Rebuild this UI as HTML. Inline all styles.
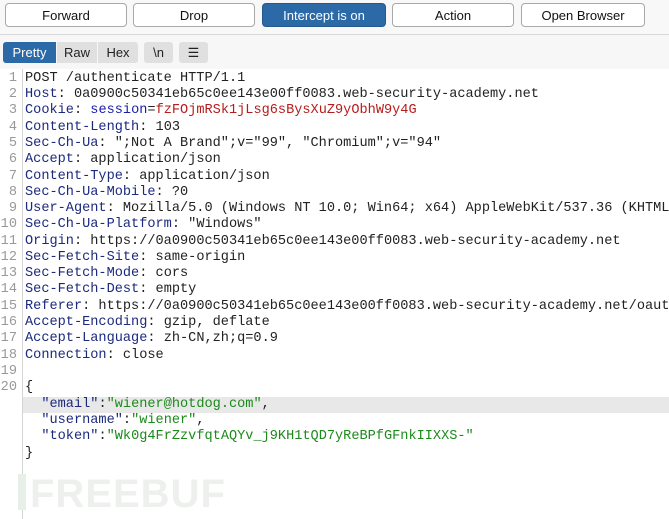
<!DOCTYPE html>
<html><head><meta charset="utf-8"><style>
body{margin:0;width:669px;height:519px;overflow:hidden;background:#fff;font-family:"Liberation Sans",sans-serif;position:relative}
.top{position:absolute;left:0;top:0;width:669px;height:34px;background:#f8f8f8;border-bottom:1px solid #d8d8d8}
.btn{position:absolute;top:3px;height:24px;border:1px solid #a8a8a8;border-radius:4px;background:#fff;font-size:13px;color:#111;text-align:center;line-height:24px;box-sizing:border-box}
.btn.on{background:#2c6aa7;border-color:#25588a;color:#fff}
.tb{position:absolute;left:0;top:35px;width:669px;height:34px;background:#f7f7f7}
.t{position:absolute;top:42px;height:21px;line-height:21px;font-size:13px;color:#222;background:#e0e0e0;text-align:center}
.wrap{position:absolute;left:0;top:0;width:669px;height:519px;overflow:hidden}
.gut{position:absolute;left:22px;top:69px;width:1px;height:450px;background:#d4d4d4}
.l{position:absolute;left:0;height:16px;line-height:16px;font-family:"Liberation Mono",monospace;font-size:13.6px;white-space:pre;color:#222}
.n{display:inline-block;width:17px;text-align:right;color:#999;margin-right:8px}
.k{color:#1c2a7e}.b{color:#1a1ab0}.r{color:#b71c1c}.g{color:#1b8a1b}
.hl{position:absolute;left:23px;top:397px;width:646px;height:16px;background:#e8e8e8}
</style></head><body>
<div class="top">
<div class="btn" style="left:5px;width:122px">Forward</div>
<div class="btn" style="left:133px;width:122px">Drop</div>
<div class="btn on" style="left:262px;width:124px">Intercept is on</div>
<div class="btn" style="left:392px;width:122px">Action</div>
<div class="btn" style="left:521px;width:124px">Open Browser</div>
</div>
<div class="tb"></div>
<div class="t" style="left:3px;width:53px;background:#2c6aa7;color:#fff;border-radius:3px 0 0 3px">Pretty</div>
<div class="t" style="left:57px;width:40px">Raw</div>
<div class="t" style="left:98px;width:40px;border-radius:0 3px 3px 0">Hex</div>
<div class="t" style="left:144px;width:29px;border-radius:3px">\n</div>
<div class="t" style="left:179px;width:29px;border-radius:3px">☰</div>
<div class="wrap">
<div class="hl"></div>
<div class="gut"></div>
<div style="position:absolute;left:18px;top:474px;width:8px;height:36px;background:#e6efe8"></div>
<div style="position:absolute;left:30px;top:474px;font:bold 40px/40px 'Liberation Sans',sans-serif;color:#eef0ee;letter-spacing:1px">FREEBUF</div>
<div class="l" style="top:71px"><span class="n">1</span>POST /authenticate HTTP/1.1</div>
<div class="l" style="top:87px"><span class="n">2</span><span class="k">Host</span>: 0a0900c50341eb65c0ee143e00ff0083.web-security-academy.net</div>
<div class="l" style="top:103px"><span class="n">3</span><span class="k">Cookie</span>: <span class="b">session</span>=<span class="r">fzFOjmRSk1jLsg6sBysXuZ9yObhW9y4G</span></div>
<div class="l" style="top:120px"><span class="n">4</span><span class="k">Content-Length</span>: 103</div>
<div class="l" style="top:136px"><span class="n">5</span><span class="k">Sec-Ch-Ua</span>: ";Not A Brand";v="99", "Chromium";v="94"</div>
<div class="l" style="top:152px"><span class="n">6</span><span class="k">Accept</span>: application/json</div>
<div class="l" style="top:169px"><span class="n">7</span><span class="k">Content-Type</span>: application/json</div>
<div class="l" style="top:185px"><span class="n">8</span><span class="k">Sec-Ch-Ua-Mobile</span>: ?0</div>
<div class="l" style="top:201px"><span class="n">9</span><span class="k">User-Agent</span>: Mozilla/5.0 (Windows NT 10.0; Win64; x64) AppleWebKit/537.36 (KHTML</div>
<div class="l" style="top:217px"><span class="n">10</span><span class="k">Sec-Ch-Ua-Platform</span>: "Windows"</div>
<div class="l" style="top:234px"><span class="n">11</span><span class="k">Origin</span>: https://0a0900c50341eb65c0ee143e00ff0083.web-security-academy.net</div>
<div class="l" style="top:250px"><span class="n">12</span><span class="k">Sec-Fetch-Site</span>: same-origin</div>
<div class="l" style="top:266px"><span class="n">13</span><span class="k">Sec-Fetch-Mode</span>: cors</div>
<div class="l" style="top:282px"><span class="n">14</span><span class="k">Sec-Fetch-Dest</span>: empty</div>
<div class="l" style="top:299px"><span class="n">15</span><span class="k">Referer</span>: https://0a0900c50341eb65c0ee143e00ff0083.web-security-academy.net/oauth-</div>
<div class="l" style="top:315px"><span class="n">16</span><span class="k">Accept-Encoding</span>: gzip, deflate</div>
<div class="l" style="top:331px"><span class="n">17</span><span class="k">Accept-Language</span>: zh-CN,zh;q=0.9</div>
<div class="l" style="top:348px"><span class="n">18</span><span class="k">Connection</span>: close</div>
<div class="l" style="top:364px"><span class="n">19</span></div>
<div class="l" style="top:380px"><span class="n">20</span>{</div>
<div class="l" style="top:397px"><span class="n"></span>  <span class="k">"email"</span>:<span class="g">"wiener@hotdog.com"</span>,</div>
<div class="l" style="top:413px"><span class="n"></span>  <span class="k">"username"</span>:<span class="g">"wiener"</span>,</div>
<div class="l" style="top:429px"><span class="n"></span>  <span class="k">"token"</span>:<span class="g">"Wk0g4FrZzvfqtAQYv_j9KH1tQD7yReBPfGFnkIIXXS-"</span></div>
<div class="l" style="top:446px"><span class="n"></span>}</div>
</div>
</body></html>
